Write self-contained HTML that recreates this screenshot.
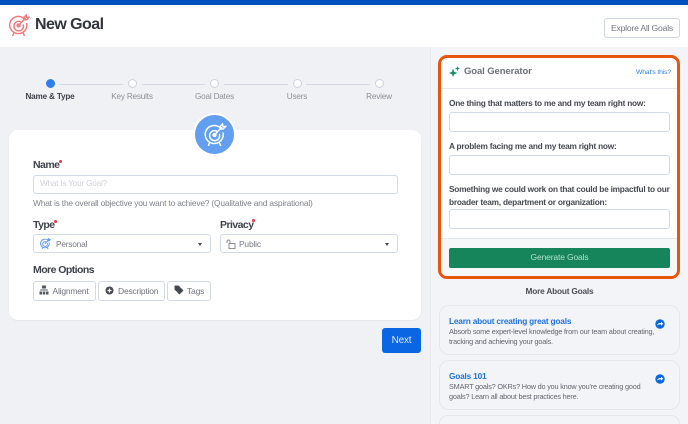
<!DOCTYPE html>
<html><head><meta charset="utf-8">
<style>
*{box-sizing:border-box;margin:0;padding:0}
html,body{width:688px;height:424px;overflow:hidden}
body{position:relative;background:#eff1f5;font-family:"Liberation Sans",sans-serif;color:#3a3d45}
.a{position:absolute;white-space:nowrap}
.lbl{font-weight:bold;font-size:10.5px;letter-spacing:-.55px;line-height:14px;color:#3f424b}
.lb2{font-weight:bold;font-size:8.3px;letter-spacing:-.23px;line-height:13px;color:#45484f}
.dot{position:absolute;width:9px;height:9px;border-radius:50%;background:#fff;border:1.5px solid #ccd3df;top:79px}
.ln{position:absolute;height:1.5px;background:#d3d8e2;top:83.5px}
.st{position:absolute;top:91px;width:80px;text-align:center;font-size:8.2px;letter-spacing:-.2px;line-height:12px;color:#8d9098}
.inp{position:absolute;background:#fff;border:1px solid #d3dae6;border-radius:3px}
.btn{position:absolute;top:281px;height:20px;background:#fff;border:1px solid #d3dae6;border-radius:3px;font-size:8.5px;letter-spacing:-.2px;line-height:18px;color:#6f727a}
.rc{position:absolute;left:439px;width:241px;border:1px solid #e4e7ed;border-radius:10px;background:#f2f4f8}
.rt{position:absolute;left:9px;top:9px;font-weight:bold;font-size:8.3px;letter-spacing:-.2px;line-height:12px;color:#1f72e6;white-space:nowrap}
.rd{position:absolute;left:9px;top:21px;font-size:7.3px;letter-spacing:-.19px;line-height:9.6px;color:#63666e;white-space:nowrap}
.ri{position:absolute;left:215px;top:13px}
</style></head><body>
<div class="a" style="left:0;top:0;width:688px;height:5px;background:#0050bf"></div>
<div class="a" style="left:0;top:5px;width:688px;height:42px;background:#fff"></div>
<svg class="a" style="left:9px;top:14px" width="21" height="22" viewBox="0 0 22 23" fill="none" stroke="#f5787a" stroke-width="1.5" stroke-linecap="round"><path d="M15 4.2A9 9 0 1 0 18.6 10"/><path d="M12 8A5 5 0 1 0 15 11.5"/><circle cx="10" cy="12" r="1.4"/><path d="M10 12L17 4.5M15.5 3.5L18 1L18.5 3.5L21 3.5L18.5 6L16 6Z"/><path d="M5 20L4 22.5M15 20L16 22.5"/></svg>
<div class="a" style="left:35px;top:15px;font-size:16px;letter-spacing:-.55px;line-height:20px;font-weight:bold;color:#33353d">New Goal</div>
<div class="a" style="left:604px;top:18px;width:76px;height:20px;background:#fff;border:1px solid #cfd5df;border-radius:3px;font-size:8.6px;letter-spacing:-.2px;line-height:18px;text-align:center;color:#71747c">Explore All Goals</div>

<div class="ln" style="left:59px;width:64px"></div>
<div class="ln" style="left:142px;width:63px"></div>
<div class="ln" style="left:224px;width:64px"></div>
<div class="ln" style="left:306px;width:64px"></div>
<div class="dot" style="left:45.5px;background:#2f80ed;border-color:#2f80ed"></div>
<div class="dot" style="left:128px"></div>
<div class="dot" style="left:210px"></div>
<div class="dot" style="left:292.5px"></div>
<div class="dot" style="left:375px"></div>
<div class="st" style="left:10px;color:#3f424b;font-weight:bold">Name &amp; Type</div>
<div class="st" style="left:92px">Key Results</div>
<div class="st" style="left:174.5px">Goal Dates</div>
<div class="st" style="left:257px">Users</div>
<div class="st" style="left:339px">Review</div>

<div class="a" style="left:9px;top:130px;width:412px;height:190px;background:#fff;border-radius:9px;box-shadow:0 1px 1px #e3e6ec"></div>
<div class="a" style="left:193px;top:113px;width:43px;height:43px;border-radius:50%;background:#629ff0;border:2px solid #fff"></div>
<svg class="a" style="left:204px;top:123px" width="23" height="23" viewBox="0 0 22 23" fill="none" stroke="#fff" stroke-width="1.5" stroke-linecap="round"><path d="M15 4.2A9 9 0 1 0 18.6 10"/><path d="M12 8A5 5 0 1 0 15 11.5"/><circle cx="10" cy="12" r="1.4"/><path d="M10 12L17 4.5M15.5 3.5L18 1L18.5 3.5L21 3.5L18.5 6L16 6Z"/><path d="M5 20L4 22.5M15 20L16 22.5"/></svg>

<div class="a lbl" style="left:33px;top:158px">Name</div>
<div class="a" style="left:59px;top:160px;width:2.5px;height:2.5px;border-radius:50%;background:#ef3e4a"></div>
<div class="inp" style="left:32.5px;top:175px;width:365px;height:19px"></div>
<div class="a" style="left:40px;top:178px;font-size:8.2px;letter-spacing:-.2px;line-height:12px;color:#d0d3d9">What Is Your Goal?</div>
<div class="a" style="left:33px;top:197px;font-size:8.4px;letter-spacing:-.18px;line-height:12px;color:#7f828a">What is the overall objective you want to achieve? (Qualitative and aspirational)</div>

<div class="a lbl" style="left:33px;top:218px">Type</div>
<div class="a" style="left:54px;top:220px;width:2.5px;height:2.5px;border-radius:50%;background:#ef3e4a"></div>
<div class="inp" style="left:32.5px;top:234px;width:178px;height:19px"></div>
<svg class="a" style="left:40px;top:238px" width="11" height="11" viewBox="0 0 22 23" fill="none" stroke="#5f9bee" stroke-width="2" stroke-linecap="round"><path d="M15 4.2A9 9 0 1 0 18.6 10"/><path d="M12 8A5 5 0 1 0 15 11.5"/><path d="M10 12L17 4.5M15.5 3.5L18 1L18.5 3.5L21 3.5L18.5 6L16 6Z"/><path d="M5 20L4 22.5M15 20L16 22.5"/></svg>
<div class="a" style="left:56px;top:238px;font-size:8.3px;letter-spacing:-.2px;line-height:12px;color:#777a82">Personal</div>
<div class="a" style="left:198px;top:243px;border-left:2.5px solid transparent;border-right:2.5px solid transparent;border-top:3px solid #44464d"></div>

<div class="a lbl" style="left:220px;top:218px">Privacy</div>
<div class="a" style="left:252px;top:219px;width:2.5px;height:2.5px;border-radius:50%;background:#ef3e4a"></div>
<div class="inp" style="left:219.5px;top:234px;width:178px;height:19px"></div>
<svg class="a" style="left:226px;top:239px" width="10" height="10" viewBox="0 0 10 10" fill="none" stroke="#8b8e95" stroke-width="1"><path d="M1 4V2.5A1.5 1.5 0 0 1 4 2.5V4"/><rect x="3" y="4.5" width="6" height="5"/></svg>
<div class="a" style="left:239px;top:238px;font-size:8.4px;letter-spacing:-.15px;line-height:12px;color:#777a82">Public</div>
<div class="a" style="left:385px;top:243px;border-left:2.5px solid transparent;border-right:2.5px solid transparent;border-top:3px solid #44464d"></div>

<div class="a lbl" style="left:33px;top:263px">More Options</div>
<div class="btn" style="left:32.5px;width:63px;padding-left:19px">Alignment</div>
<svg class="a" style="left:39px;top:285px" width="10" height="10" viewBox="0 0 10 10" fill="#54575e"><rect x="3" y="0.5" width="4" height="3"/><rect x="0.5" y="6.5" width="2.5" height="3"/><rect x="3.75" y="6.5" width="2.5" height="3"/><rect x="7" y="6.5" width="2.5" height="3"/><rect x="1.2" y="4.5" width="7.6" height="1"/></svg>
<div class="btn" style="left:98px;width:67px;padding-left:19px">Description</div>
<svg class="a" style="left:105px;top:286px" width="9" height="9" viewBox="0 0 9 9"><circle cx="4.5" cy="4.5" r="4" fill="#46494f"/><path d="M2.5 4.5H6.5M4.5 2.5V6.5" stroke="#fff" stroke-width="1.2"/></svg>
<div class="btn" style="left:167px;width:44px;padding-left:19px">Tags</div>
<svg class="a" style="left:174px;top:285px" width="10" height="10" viewBox="0 0 10 10"><path d="M0.5 1V4.5L5.5 9.5L9.5 5.5L4.5 0.5H1Z" fill="#46494f"/></svg>

<div class="a" style="left:382px;top:328px;width:39px;height:25px;background:#0b66e4;border-radius:3px;color:#dbe8fb;font-size:10px;letter-spacing:-.2px;line-height:25px;text-align:center">Next</div>

<div class="a" style="left:430px;top:47px;width:258px;height:377px;background:#f2f4f8;border-left:1px solid #e6e8ee"></div>

<div class="a" style="left:438px;top:55px;width:242px;height:224px;background:#fff;border:3px solid #e8560c;border-radius:9px;overflow:hidden">
  <div class="a" style="left:0;top:30px;width:236px;height:1px;background:#e4e7ed"></div>
  <div class="a" style="left:0;top:180px;width:236px;height:38px;background:#f6f7f9;border-top:1px solid #e4e7ed"></div>
</div>
<svg class="a" style="left:449px;top:66px" width="11" height="11" viewBox="0 0 11 11" fill="#17946a"><path d="M4 2.5L5.2 5.8L8.5 7L5.2 8.2L4 11L2.8 8.2L0 7L2.8 5.8Z"/><path d="M8.5 0L9.2 1.8L11 2.5L9.2 3.2L8.5 5L7.8 3.2L6 2.5L7.8 1.8Z"/></svg>
<div class="a" style="left:464px;top:65px;font-size:9.5px;line-height:14px;font-weight:bold;color:#6d7078;letter-spacing:-.1px">Goal Generator</div>
<div class="a" style="left:636px;top:67px;font-size:6.8px;letter-spacing:-.15px;line-height:11px;color:#2f80ed">What's this?</div>
<div class="a lb2" style="left:449px;top:97px">One thing that matters to me and my team right now:</div>
<div class="inp" style="left:449px;top:112px;width:221px;height:20px"></div>
<div class="a lb2" style="left:449px;top:140px">A problem facing me and my team right now:</div>
<div class="inp" style="left:449px;top:155px;width:221px;height:20px"></div>
<div class="a lb2" style="left:449px;top:183px;line-height:12.5px">Something we could work on that could be impactful to our<br>broader team, department or organization:</div>
<div class="inp" style="left:449px;top:209px;width:221px;height:20px"></div>
<div class="a" style="left:449px;top:248px;width:221px;height:19.5px;background:#17855c;border-radius:2px;color:#b5dfcd;font-size:8.5px;letter-spacing:-.15px;line-height:19.5px;text-align:center">Generate Goals</div>

<div class="a" style="left:439px;top:285px;width:241px;text-align:center;font-weight:bold;font-size:8.3px;letter-spacing:-.2px;line-height:12px;color:#4a4d55">More About Goals</div>

<div class="rc" style="top:305px;height:50px">
  <div class="rt">Learn about creating great goals</div>
  <div class="rd">Absorb some expert-level knowledge from our team about creating,<br>tracking and achieving your goals.</div>
  <svg class="ri" width="10" height="10" viewBox="0 0 10 10"><circle cx="5" cy="5" r="4.7" fill="#0b66e4"/><path d="M2 6.5C2.5 4.5 4 4 6 4V2.8L8.3 4.8L6 6.6V5.4C4.5 5.4 3.2 5.6 2 6.5Z" fill="#fff"/></svg>
</div>
<div class="rc" style="top:360px;height:50px">
  <div class="rt">Goals 101</div>
  <div class="rd">SMART goals? OKRs? How do you know you're creating good<br>goals? Learn all about best practices here.</div>
  <svg class="ri" width="10" height="10" viewBox="0 0 10 10"><circle cx="5" cy="5" r="4.7" fill="#0b66e4"/><path d="M2 6.5C2.5 4.5 4 4 6 4V2.8L8.3 4.8L6 6.6V5.4C4.5 5.4 3.2 5.6 2 6.5Z" fill="#fff"/></svg>
</div>
<div class="rc" style="top:415px;height:9px;border-bottom:0;border-radius:10px 10px 0 0"></div>
</body></html>
